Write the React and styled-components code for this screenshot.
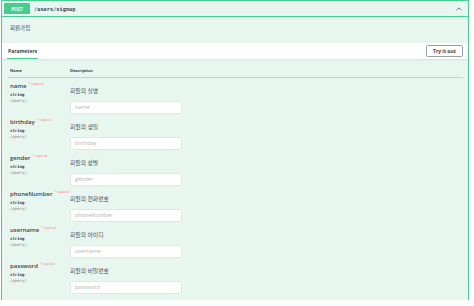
import React from 'react';
import styled, { createGlobalStyle } from 'styled-components';

const GlobalStyle = createGlobalStyle`
  html, body {
    margin: 0;
    padding: 0;
    background: #ffffff;
  }
  body {
    font-family: "Open Sans", "Noto Sans", "Noto Sans CJK KR", sans-serif;
    color: #3b4151;
  }
`;

const params = [
  { name: 'name', desc: '회원의 실명' },
  { name: 'birthday', desc: '회원의 생일' },
  { name: 'gender', desc: '회원의 성별' },
  { name: 'phoneNumber', desc: '회원의 전화번호' },
  { name: 'username', desc: '회원의 아이디' },
  { name: 'password', desc: '회원의 비밀번호' },
];

const App = () => {
  return (
    <>
      <GlobalStyle />
      <StOpBlock>
        <StSummary>
          <StMethod>POST</StMethod>
          <StPath>/users/signup</StPath>
          <StChevron viewBox="0 0 10 6">
            <path d="M1 5 L5 1 L9 5" fill="none" stroke="#3b4151" strokeWidth="1.2" />
          </StChevron>
        </StSummary>
        <StDescription>회원가입</StDescription>
        <StSectionHeader>
          <StTab>Parameters</StTab>
          <StTryButton>Try it out</StTryButton>
        </StSectionHeader>
        <StTable>
          <StHeadRow>
            <StHeadCell $width="62px">Name</StHeadCell>
            <StHeadCell>Description</StHeadCell>
          </StHeadRow>
          {params.map((p) => (
            <StRow key={p.name}>
              <StNameCol>
                <StParamName>
                  {p.name}
                  <StRequired>* required</StRequired>
                </StParamName>
                <StType>string</StType>
                <StIn>(query)</StIn>
              </StNameCol>
              <StDescCol>
                <StParamDesc>{p.desc}</StParamDesc>
                <StInput placeholder={p.name} />
              </StDescCol>
            </StRow>
          ))}
        </StTable>
      </StOpBlock>
    </>
  );
};

const StOpBlock = styled.div`
  width: 466px;
  height: 300px;
  margin-left: 1px;
  border-left: 1px solid #49cc90;
  border-right: 1px solid #49cc90;
  background-color: #e8f6f0;
  overflow: hidden;
`;

const StSummary = styled.div`
  display: flex;
  align-items: center;
  height: 15px;
  padding: 0 2px;
  border-top: 1px solid #49cc90;
  border-bottom: 1px solid #49cc90;
`;

const StMethod = styled.span`
  display: inline-flex;
  align-items: center;
  justify-content: center;
  width: 26px;
  height: 11px;
  border-radius: 1px;
  background-color: #49cc90;
  color: #ffffff;
  font-size: 4.5px;
  font-weight: 700;
`;

const StPath = styled.span`
  flex: 1;
  margin-left: 4px;
  font-family: "DejaVu Sans Mono", monospace;
  font-size: 5.3px;
  font-weight: 700;
  color: #3b4151;
`;

const StChevron = styled.svg`
  width: 6px;
  height: 4px;
  margin-right: 4px;
`;

const StDescription = styled.div`
  height: 18px;
  padding: 8px 8px 0;
  font-size: 5.5px;
  line-height: 7px;
  color: #3b4151;
`;

const StSectionHeader = styled.div`
  display: flex;
  align-items: center;
  justify-content: space-between;
  height: 16px;
  padding: 0 5px 0 5px;
  background-color: rgba(255, 255, 255, 0.85);
  box-shadow: 0 1px 2px rgba(0, 0, 0, 0.08);
`;

const StTab = styled.div`
  align-self: flex-end;
  padding: 0 1px 4px;
  font-size: 5px;
  font-weight: 700;
  border-bottom: 1.5px solid #49cc90;
`;

const StTryButton = styled.button`
  width: 37px;
  height: 12px;
  padding: 0;
  border: 1px solid #9aa0a6;
  border-radius: 1.5px;
  background: transparent;
  font-family: "Open Sans", sans-serif;
  font-size: 5px;
  font-weight: 700;
  color: #3b4151;
`;

const StTable = styled.div`
  padding: 0 5px 0 6px;
`;

const StHeadRow = styled.div`
  display: flex;
  align-items: flex-end;
  height: 19px;
  padding-bottom: 4px;
  box-sizing: border-box;
  border-bottom: 1px solid rgba(59, 65, 81, 0.2);
`;

const StHeadCell = styled.div`
  flex: 0 0 ${({ $width }) => $width || 'auto'};
  box-sizing: border-box;
  padding-left: ${({ $width }) => ($width ? '2px' : '0')};
  font-size: 4px;
  font-weight: 700;
  color: #3b4151;
`;

const StRow = styled.div`
  display: flex;
  height: 36px;
  padding-top: 4px;
  box-sizing: border-box;
`;

const StNameCol = styled.div`
  flex: 0 0 62px;
  box-sizing: border-box;
  padding-left: 2px;
  display: flex;
  flex-direction: column;
  white-space: nowrap;
  min-width: 0;
`;

const StParamName = styled.div`
  font-size: 6px;
  font-weight: 600;
  line-height: 8px;
  color: #3b4151;
`;

const StRequired = styled.span`
  position: relative;
  top: -3px;
  margin-left: 2px;
  font-size: 3px;
  font-weight: 400;
  color: rgba(255, 0, 0, 0.6);
`;

const StType = styled.div`
  font-family: "DejaVu Sans Mono", monospace;
  font-size: 4px;
  font-weight: 700;
  line-height: 7px;
`;

const StIn = styled.div`
  font-family: "DejaVu Sans Mono", monospace;
  font-size: 4px;
  font-style: italic;
  line-height: 6px;
  color: #808080;
`;

const StDescCol = styled.div`
  display: flex;
  flex-direction: column;
`;

const StParamDesc = styled.div`
  margin-top: 5.5px;
  font-size: 5.8px;
  line-height: 7px;
  color: #4a4f5c;
`;

const StInput = styled.input`
  width: 112px;
  height: 13px;
  margin-top: 6px;
  padding: 0 4px;
  box-sizing: border-box;
  border: 1px solid #e3e6e4;
  border-radius: 2px;
  background: #ffffff;
  font-family: "Open Sans", sans-serif;
  font-size: 5.5px;
  outline: none;
  &::placeholder {
    color: #b5b5b5;
  }
`;

export default App;
